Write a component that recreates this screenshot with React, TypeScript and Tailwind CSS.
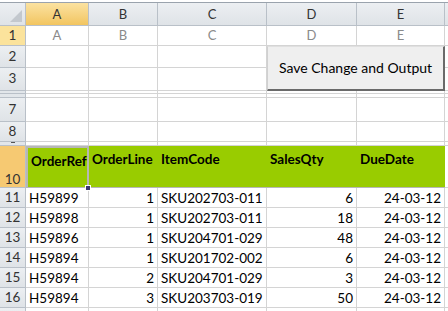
import React from "react";

const COLS = ["A", "B", "C", "D", "E"];

const DATA: [string, string, string, string, string][] = [
  ["H59899", "1", "SKU202703-011", "6", "24-03-12"],
  ["H59898", "1", "SKU202703-011", "18", "24-03-12"],
  ["H59896", "1", "SKU204701-029", "48", "24-03-12"],
  ["H59894", "1", "SKU201702-002", "6", "24-03-12"],
  ["H59894", "2", "SKU204701-029", "3", "24-03-12"],
  ["H59894", "3", "SKU203703-019", "50", "24-03-12"],
];

const HEADINGS = ["OrderRef", "OrderLine", "ItemCode", "SalesQty", "DueDate"];

const cell = "border-r border-b border-[#d4d4d4] bg-white overflow-hidden whitespace-nowrap";
const rowHead =
  "flex items-center justify-center border-r border-b border-[#b9c0c8] bg-gradient-to-b from-[#eceff2] to-[#dfe3e7] text-[#333] overflow-hidden";

function RowHeader({ label, tone = "plain", align = "center" }: { label: string; tone?: "plain" | "light" | "active"; align?: "center" | "end" }) {
  const bg =
    tone === "active"
      ? "bg-none bg-[#f6c972]"
      : tone === "light"
        ? "bg-none bg-[#fbe39c]"
        : "";
  return (
    <div className={`${rowHead} ${bg} ${align === "end" ? "items-end pb-[1px]" : ""}`}>
      {label}
    </div>
  );
}

function EmptyRow({ label, tone }: { label: string; tone?: "plain" | "light" | "active" }) {
  return (
    <>
      <RowHeader label={label} tone={tone} />
      {COLS.map((c) => (
        <div className={cell} key={c} />
      ))}
      <div className={cell} />
    </>
  );
}

function HiddenRow() {
  return (
    <>
      <div className="border-r border-b border-[#b9c0c8] bg-[#e2e6ea]" />
      {COLS.map((c) => (
        <div className="border-r border-b border-[#d4d4d4] bg-white" key={c} />
      ))}
      <div className="border-r border-b border-[#d4d4d4] bg-white" />
    </>
  );
}

export default function App() {
  return (
    <div className="relative h-[311px] w-[448px] overflow-hidden bg-white font-['Lato','Noto_Sans',sans-serif] text-[13.5px] leading-none text-black">
      <div className="grid grid-cols-[26px_63px_69px_109px_90px_88px_20px] grid-rows-[3px_23px_20px_22px_23px_3px_4px_24px_20px_4px_42px_20px_20px_20px_20px_20px_20px_20px]">
        {/* strip under the formula bar */}
        <div className="col-span-7 border-b border-[#9aa3ad] bg-white" />

        {/* column headers */}
        <div className="relative border-r border-b border-[#b9c0c8] bg-gradient-to-b from-[#eceff2] to-[#dfe3e7]">
          <svg className="absolute right-[3px] bottom-[3px]" width="12" height="12" viewBox="0 0 12 12">
            <polygon points="12,0 12,12 0,12" fill="#c3c8ce" />
          </svg>
        </div>
        {COLS.map((c, i) => (
          <div
            className={`flex items-center justify-center border-r border-b border-[#b9c0c8] text-[13px] text-[#333] ${
              i === 0
                ? "bg-gradient-to-b from-[#fbe2a0] to-[#f2c55f]"
                : "bg-gradient-to-b from-[#eceff2] to-[#dfe3e7]"
            }`}
            key={c}
          >
            {c}
          </div>
        ))}
        <div className="border-b border-[#b9c0c8] bg-gradient-to-b from-[#eceff2] to-[#dfe3e7]" />

        {/* row 1 */}
        <RowHeader label="1" tone="light" />
        {COLS.map((c) => (
          <div className={`${cell} flex items-center justify-center text-[13px] text-[#8a8a8a]`} key={c}>
            {c}
          </div>
        ))}
        <div className={cell} />

        <EmptyRow label="2" />
        <EmptyRow label="3" />
        <HiddenRow />
        <HiddenRow />
        <EmptyRow label="7" />
        <EmptyRow label="8" />

        {/* row 9, nearly hidden */}
        <div className="flex justify-center border-r border-b border-[#b9c0c8] bg-[#e2e6ea]">
          <div className="h-[1px] w-[4px] bg-[#555]" />
        </div>
        {COLS.map((c) => (
          <div className="border-r border-b border-[#d4d4d4] bg-white" key={c} />
        ))}
        <div className="border-r border-b border-[#d4d4d4] bg-white" />

        {/* row 10: headings */}
        <RowHeader label="10" tone="active" align="end" />
        {HEADINGS.map((h, i) => (
          <div
            className={`relative border-b border-[#b7b7b7] bg-[#99cc00] px-[3px] pt-[7px] font-bold whitespace-nowrap ${
              i === 0 ? "border-2 border-[#4d4790] px-[2px] pt-[6px]" : ""
            }`}
            key={h}
          >
            {h}
            {i === 0 ? (
              <div className="absolute -right-[4px] -bottom-[4px] z-10 h-[6px] w-[6px] border border-white bg-[#3c3770]" />
            ) : null}
          </div>
        ))}
        <div className={cell} />

        {/* data rows */}
        {DATA.map((row, r) => (
          <React.Fragment key={r}>
            <RowHeader label={String(11 + r)} />
            {row.map((v, i) => (
              <div
                className={`${cell} flex items-center px-[3px] pt-[2px] ${
                  i === 1 || i === 3 || i === 4 ? "justify-end" : "justify-start"
                }`}
                key={i}
              >
                {v}
              </div>
            ))}
            <div className={cell} />
          </React.Fragment>
        ))}

        <EmptyRow label="" />
      </div>

      {/* form button laid over the sheet */}
      <button
        type="button"
        className="absolute top-[46px] left-[267px] flex h-[45px] w-[178px] items-center justify-center border-t border-l border-r-2 border-b-2 border-t-[#e0e0e0] border-l-[#d0d0d0] border-r-[#6a6a6a] border-b-[#6a6a6a] bg-[#efefef] text-[14px] text-black"
      >
        Save Change and Output
      </button>
    </div>
  );
}
